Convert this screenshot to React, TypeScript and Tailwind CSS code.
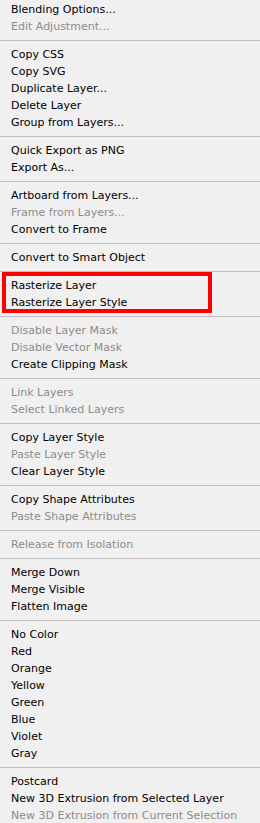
import React from "react";

type Item = { t: string; d?: boolean };
const groups: Item[][] = [
  [{ t: "Blending Options..." }, { t: "Edit Adjustment...", d: true }],
  [
    { t: "Copy CSS" },
    { t: "Copy SVG" },
    { t: "Duplicate Layer..." },
    { t: "Delete Layer" },
    { t: "Group from Layers..." },
  ],
  [{ t: "Quick Export as PNG" }, { t: "Export As..." }],
  [
    { t: "Artboard from Layers..." },
    { t: "Frame from Layers...", d: true },
    { t: "Convert to Frame" },
  ],
  [{ t: "Convert to Smart Object" }],
  [{ t: "Rasterize Layer" }, { t: "Rasterize Layer Style" }],
  [
    { t: "Disable Layer Mask", d: true },
    { t: "Disable Vector Mask", d: true },
    { t: "Create Clipping Mask" },
  ],
  [{ t: "Link Layers", d: true }, { t: "Select Linked Layers", d: true }],
  [
    { t: "Copy Layer Style" },
    { t: "Paste Layer Style", d: true },
    { t: "Clear Layer Style" },
  ],
  [{ t: "Copy Shape Attributes" }, { t: "Paste Shape Attributes", d: true }],
  [{ t: "Release from Isolation", d: true }],
  [{ t: "Merge Down" }, { t: "Merge Visible" }, { t: "Flatten Image" }],
  [
    { t: "No Color" },
    { t: "Red" },
    { t: "Orange" },
    { t: "Yellow" },
    { t: "Green" },
    { t: "Blue" },
    { t: "Violet" },
    { t: "Gray" },
  ],
  [
    { t: "Postcard" },
    { t: "New 3D Extrusion from Selected Layer" },
    { t: "New 3D Extrusion from Current Selection", d: true },
  ],
];

export default function App() {
  return (
    <div
      className="w-[260px] h-[823px] overflow-hidden bg-[#f0f0f0] pt-px text-[11px] leading-[17px]"
      style={{ fontFamily: "Tahoma, 'DejaVu Sans', sans-serif" }}
    >
      {groups.map((g, gi) => (
        <div key={gi}>
          {gi > 0 && (
            <div className="py-[5px]">
              <div className="h-px bg-[#bdbdbd]" />
            </div>
          )}
          <div className="relative">
            {g.map((it) => (
              <div
                key={it.t}
                className={`h-[17px] pl-[11px] whitespace-nowrap ${
                  it.d ? "text-[#8c8c8c]" : "text-[#000000]"
                }`}
              >
                {it.t}
              </div>
            ))}
            {gi === 5 && (
              <div className="absolute left-[2px] top-[-5px] w-[210px] h-[41px] border-4 border-[#ff0000]" />
            )}
          </div>
        </div>
      ))}
    </div>
  );
}
